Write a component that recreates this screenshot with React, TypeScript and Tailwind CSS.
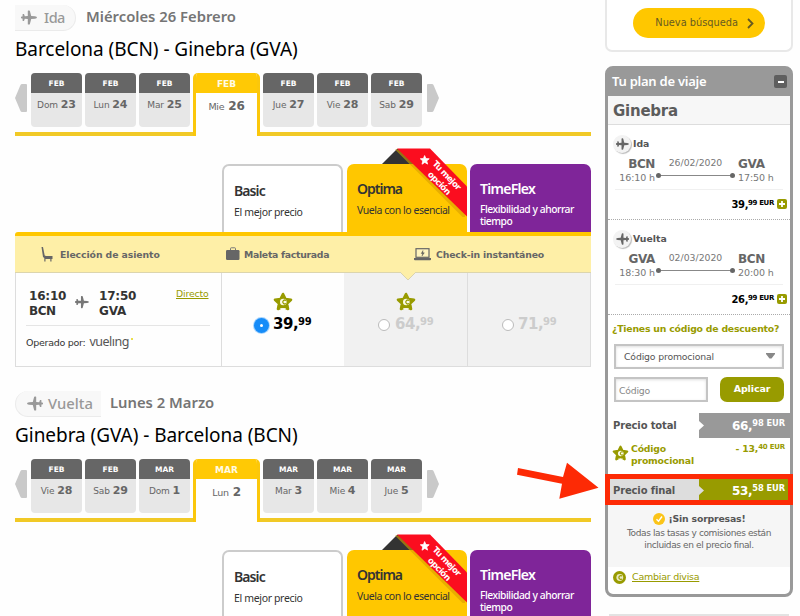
import type { ReactNode } from 'react';

interface Day {
  month: string;
  name: string;
  day: string;
}

interface LegProps {
  label: string;
  from: string;
  to: string;
  date: string;
  depart: string;
  arrive: string;
  price: string;
  flipped?: boolean;
}

const outboundDays: Day[] = [
  { month: 'FEB', name: 'Dom', day: '23' },
  { month: 'FEB', name: 'Lun', day: '24' },
  { month: 'FEB', name: 'Mar', day: '25' },
  { month: 'FEB', name: 'Mie', day: '26' },
  { month: 'FEB', name: 'Jue', day: '27' },
  { month: 'FEB', name: 'Vie', day: '28' },
  { month: 'FEB', name: 'Sab', day: '29' },
];

const returnDays: Day[] = [
  { month: 'FEB', name: 'Vie', day: '28' },
  { month: 'FEB', name: 'Sab', day: '29' },
  { month: 'MAR', name: 'Dom', day: '1' },
  { month: 'MAR', name: 'Lun', day: '2' },
  { month: 'MAR', name: 'Mar', day: '3' },
  { month: 'MAR', name: 'Mie', day: '4' },
  { month: 'MAR', name: 'Jue', day: '5' },
];

function Plane({ className = '', flipped = false }: { className?: string; flipped?: boolean }) {
  return (
    <svg viewBox="0 0 16 14" fill="currentColor" className={`${className} ${flipped ? '-scale-x-100' : ''}`}>
      <path d="M0 6.200 1.500 5.900 1.700 3.500H3l.8 2.200L6.800 5.500V.6Q6.800 0 7.400 0h.8q.5 0 .7.600l1.300 4.900 3.800.3Q16 6.200 16 7t-2 1.200l-3.800.3-1.300 4.900q-.2.600-.7.600h-.8q-.6 0-.6-.6V8.500l-3-.2-.8 2.200H1.700l-.2-2.400L0 7.800z" />
    </svg>
  );
}

function Star({ className = '' }: { className?: string }) {
  return (
    <svg viewBox="0 0 20 19" className={className}>
      <path
        d="M10 2l2.500 5 5.500.7-4 3.900 1 5.400-5-2.400L5 17l1-5.400-4-3.900L7.500 7z"
        fill="#989b00"
        stroke="#989b00"
        strokeWidth="2.600"
        strokeLinejoin="round"
      />
      <circle cx="10.300" cy="10" r="3.300" fill="#fbfbe8" />
      <path d="M13 8.600a1.900 1.900 0 1 0 0 2.800" fill="none" stroke="#989b00" strokeWidth="1.200" />
      <path d="M7.300 16.600h5.400" stroke="#fbfbe8" strokeWidth="1" />
    </svg>
  );
}

function Ribbon() {
  return (
    <svg viewBox="0 0 85 69" className="absolute left-[35px] -top-[16px] h-[69px] w-[85px]">
      <path d="M0 16 15 1h4l14 15z" fill="#333" />
      <path d="M14 0h33l37 38v32z" fill="#d99d00" opacity=".6" transform="translate(-1 1.500)" />
      <path d="M15 .500h33L85 38.500v30z" fill="#fb0d1f" />
      <path
        d="M42.600 7.600l1.300 3 3.300.2-2.500 2.100.9 3.200-2.800-1.700-2.800 1.800.8-3.300-2.500-2.100 3.200-.3z"
        fill="#fff"
        stroke="#fff"
        strokeWidth=".8"
        strokeLinejoin="round"
      />
      <text
        transform="translate(64.300 28) rotate(46)"
        textAnchor="middle"
        y="2"
        fill="#fff"
        className="font-['DejaVu_Sans'] text-[8.500px] font-bold"
        textLength="37"
      >
        Tu mejor
      </text>
      <text
        transform="translate(57.500 35) rotate(46)"
        textAnchor="middle"
        y="3"
        fill="#fff"
        className="font-['DejaVu_Sans'] text-[8.500px] font-bold"
        textLength="29"
      >
        opción
      </text>
    </svg>
  );
}

function Chevron({ right = false }: { right?: boolean }) {
  return (
    <svg viewBox="0 0 12 28" className={`mt-[11px] h-[28px] w-[12px] ${right ? 'ml-[5px]' : 'mr-[4px] -scale-x-100'}`}>
      <path d="M0 1q0-1 1-1h4q1 0 1.500 1L12 14 6.500 27Q6 28 5 28H1q-1 0-1-1z" fill="#c9c9c9" />
    </svg>
  );
}

function DateTabs({ days }: { days: Day[] }) {
  return (
    <div className="flex h-[63px]">
      <div className="flex border-b-4 border-[#f1c926]">
        <Chevron />
      </div>
      {days.map((d, i) =>
        i === 3 ? (
          <div key={i} className="w-[67px] overflow-hidden rounded-t-[5px] border-x-[3px] border-[#fbc70b]">
            <div className="flex h-[20px] items-center justify-center bg-[#ffc905] pt-[3px] text-[9px] font-bold text-[#fffbe5]">
              {d.month}
            </div>
            <div className="pt-[4px] text-center text-[9.500px] tracking-[-0.200px] text-[#666]">
              {d.name} <b className="ml-[1px] text-[12px]">{d.day}</b>
            </div>
          </div>
        ) : (
          <div key={i} className={`border-b-4 border-[#f1c926] ${i < 3 ? 'pr-[3px]' : 'pl-[3px]'}`}>
            <div className="h-[54px] w-[51px] overflow-hidden rounded-[4px] bg-[#e7e7e7]">
              <div className="flex h-[20px] items-center justify-center bg-[#666] pt-[2px] text-[7.500px] font-bold text-white">
                {d.month}
              </div>
              <div className="pt-[4px] text-center text-[9px] tracking-[-0.100px] text-[#666]">
                {d.name} <b className="text-[11px]">{d.day}</b>
              </div>
            </div>
          </div>
        ),
      )}
      <div className="flex-1 border-b-4 border-[#f1c926]">
        <Chevron right />
      </div>
    </div>
  );
}

function FareCards() {
  return (
    <div className="mt-[28px] flex h-[68px] justify-end font-['Noto_Sans'] text-[#333]">
      <div className="mr-[4px] h-full w-[121px] rounded-t-[7px] border-2 border-b-0 border-[#ccc] bg-white pl-[10px] pt-[15px]">
        <h3 className="text-[14px] leading-[19px] font-semibold tracking-[-0.900px]">Basic</h3>
        <p className="mt-[5px] text-[10.500px] leading-[14px] tracking-[-0.350px]">El mejor precio</p>
      </div>
      <div className="relative mr-[3px] h-full w-[120px] rounded-t-[7px] bg-[#ffc700] pl-[10px] pt-[16px]">
        <Ribbon />
        <h3 className="text-[14px] leading-[18px] font-semibold tracking-[-1px]">Optima</h3>
        <p className="mt-[5px] text-[10.500px] leading-[14px] whitespace-nowrap tracking-[-0.450px]">
          Vuela con lo esencial
        </p>
      </div>
      <div className="h-full w-[121px] rounded-t-[7px] bg-[#7f2599] pl-[10px] pt-[16px] text-white">
        <h3 className="text-[14px] leading-[18px] font-semibold tracking-[-0.700px]">TimeFlex</h3>
        <div className="mt-[5px] text-[10.300px] leading-[12px] font-medium tracking-[-0.450px]">
          <p>Flexibilidad y ahorrar</p>
          <p>tiempo</p>
        </div>
      </div>
    </div>
  );
}

function FlightSection({
  tag,
  date,
  route,
  days,
  children,
}: {
  tag: ReactNode;
  date: string;
  route: string;
  days: Day[];
  children?: ReactNode;
}) {
  return (
    <section className="h-[386px]">
      <div className="flex h-[34px] items-center pt-[2px] font-['Noto_Sans']">
        {tag}
        <h2 className="-mt-[3px] text-[14.800px] font-semibold text-[#757575]">{date}</h2>
      </div>
      <h1 className="h-[39px] pt-[3px] font-['Noto_Sans'] text-[19px] leading-[25px] tracking-[-0.050px] whitespace-nowrap text-black">
        {route}
      </h1>
      <DateTabs days={days} />
      <FareCards />
      {children}
    </section>
  );
}

function FeatureBar() {
  return (
    <div className="relative flex h-[41px] items-center rounded-tl-[3px] border-t-4 border-b border-t-[#ffc700] border-b-[#dcd5ad] bg-[#feefa7] text-[9.300px] font-bold tracking-[-0.150px] text-[#666]">
      <div className="flex w-[211px] items-center pl-[26px]">
        <svg viewBox="0 0 12 15" className="mr-[7px] h-[15px] w-[12px]">
          <path d="M.5 0H2l1.700 8.500 1.300.5h6.500v3h-1v2.500H9.300V12H4.500v2.500H3.300v-3.600L2 10z" fill="#666" />
        </svg>
        <span className="pt-px tracking-[-0.080px]">Elección de asiento</span>
      </div>
      <div className="flex w-[188px] items-center">
        <svg viewBox="0 0 14 14" className="mr-[4px] h-[14px] w-[14px]">
          <path d="M4.500 4V1.500q0-.7.700-.7h3.600q.7 0 .7.700V4" fill="none" stroke="#777" />
          <rect y="3" width="13.500" height="10" rx="1.200" fill="#666" />
        </svg>
        <span className="pt-px tracking-[-0.280px]">Maleta facturada</span>
      </div>
      <div className="flex items-center">
        <svg viewBox="0 0 17 13" className="mr-[5px] h-[13px] w-[17px]">
          <rect x="2" y=".7" width="13" height="8.600" fill="#fff4bd" stroke="#666" strokeWidth="1.200" />
          <path d="M0 10h17v1.500q0 .8-1 .8H1q-1 0-1-.8z" fill="#666" />
          <path d="M9 2.500 7.200 5.500h1.500L8 8l2.300-3.200H8.700z" fill="#555" stroke="#555" strokeWidth=".4" />
        </svg>
        <span className="pt-px">Check-in instantáneo</span>
      </div>
      <svg viewBox="0 0 18 9" className="absolute -bottom-[9px] left-[384px] h-[9px] w-[18px]">
        <path d="M1 0l8 8 8-8" fill="#feefa7" stroke="#d9d3b0" />
        <path d="M2 0h14" stroke="#feefa7" strokeWidth="1.500" />
      </svg>
    </div>
  );
}

function FarePrice({ amount, className }: { amount: string; className: string }) {
  return (
    <div className={`flex ${className}`}>
      <b className="text-[15px] leading-[22px] tracking-[-0.500px]">{amount},</b>
      <b className="text-[10px] leading-[18px] tracking-[-0.300px]">99</b>
    </div>
  );
}

function FlightRow() {
  return (
    <div className="flex h-[94px] border border-t-0 border-[#ddd]">
      <div className="w-[206px] border-r border-[#ddd] pl-[10px]">
        <div className="flex h-[53px] w-[184px] border-b border-[#e5e5e5] pl-[3px] pt-[16px] text-[12px] leading-[15px] font-bold text-[#333]">
          <div className="w-[46px]">
            <div className="tracking-[-0.200px]">16:10</div>
            <div className="tracking-[-0.500px]">BCN</div>
          </div>
          <Plane className="mt-[6px] mr-[10px] h-[14px] w-[14px] text-[#777]" />
          <div className="w-[76px]">
            <div className="tracking-[-0.200px]">17:50</div>
            <div className="tracking-[-0.200px]">GVA</div>
          </div>
          <a className="-mt-[3px] ml-px text-[9.300px] font-normal tracking-[-0.150px] text-[#989b00] underline">
            Directo
          </a>
        </div>
        <div className="flex items-baseline pt-[7px]">
          <span className="text-[9.500px] tracking-[-0.280px] text-[#333]">Operado por:</span>
          <span className="ml-[4px] font-['Noto_Sans'] text-[12.500px] tracking-[-0.500px] text-[#555]">vuelıng</span>
          <span className="mb-[7px] ml-[2px] h-[2px] w-[2px] self-center rounded-full bg-[#e3d312]" />
        </div>
      </div>
      <div className="w-[122px] pt-[19px]">
        <Star className="ml-[51px] h-[19px] w-[20px]" />
        <div className="mt-[2px] flex h-[24px] pl-[32px]">
          <span className="mt-[5px] flex h-[15px] w-[15px] items-center justify-center rounded-full bg-[#168cf8] ring-1 ring-[#a9d5fd]">
            <span className="h-[3px] w-[3px] rounded-full bg-white" />
          </span>
          <FarePrice amount="39" className="ml-[4px] text-black" />
        </div>
      </div>
      <div className="w-[124px] border-r border-[#ddd] bg-[#f1f1f1] pt-[19px]">
        <Star className="ml-[52px] h-[19px] w-[20px]" />
        <div className="mt-[2px] flex h-[24px] pl-[34px]">
          <span className="mt-[6px] h-[12px] w-[12px] rounded-full border border-[#bbb] bg-white" />
          <FarePrice amount="64" className="ml-[5px] text-[#ccc]" />
        </div>
      </div>
      <div className="flex-1 bg-[#f1f1f1] pt-[40px]">
        <div className="flex h-[24px] pl-[34px]">
          <span className="mt-[6px] h-[12px] w-[12px] rounded-full border border-[#bbb] bg-white" />
          <FarePrice amount="71" className="ml-[4px] text-[#ccc]" />
        </div>
      </div>
    </div>
  );
}

function Leg({ label, from, to, date, depart, arrive, price, flipped }: LegProps) {
  return (
    <div className="h-[95px] border-b border-dotted border-[#aaa] pt-[9px] text-[#666]">
      <div className="flex h-[20px] items-center pl-[5px]">
        <span className="flex h-[18px] w-[18px] items-center justify-center rounded-full bg-[#f3f3f3] shadow-[1px_1px_1px_#bbb]">
          <Plane className="h-[12px] w-[13px]" flipped={flipped} />
        </span>
        <b className="ml-[2px] text-[9.300px] text-[#555]">{label}</b>
      </div>
      <div className="flex">
        <div className="w-[47px] pt-[4px] text-right">
          <b className="block text-[12px] leading-[13px] tracking-[-0.400px]">{from}</b>
          <span className="block text-[9.500px] leading-[13px] tracking-[-0.100px] text-[#777]">{depart} h</span>
        </div>
        <div className="mx-[1px] w-[79px] text-center">
          <div className="pt-[3px] text-[9.300px] leading-[11px] text-[#777]">{date}</div>
          <div className="mt-[5px] flex items-center">
            <span className="h-[5px] w-[5px] rounded-full bg-[#666]" />
            <span className="h-px flex-1 bg-[#888]" />
            <span className="h-[5px] w-[5px] rounded-full bg-[#666]" />
          </div>
        </div>
        <div className="pl-[2px] pt-[4px]">
          <b className="block text-[12px] leading-[13px] tracking-[-0.300px]">{to}</b>
          <span className="block text-[9.500px] leading-[13px] tracking-[-0.100px] text-[#777]">{arrive} h</span>
        </div>
      </div>
      <div className="mx-[7px] mt-[5px] h-px bg-[#f0f0f0]" />
      <div className="mt-[8px] flex items-start justify-end pr-[3px] text-black">
        <b className="text-[10px] leading-[14px] tracking-[-0.400px]">{price},</b>
        <b className="text-[7px] leading-[11px] tracking-[-0.350px]">99 EUR</b>
        <span className="mt-px ml-[3px] flex h-[10px] w-[10px] items-center justify-center rounded-[2px] bg-[#989b00]">
          <svg viewBox="0 0 6 6" className="h-[6px] w-[6px]">
            <path d="M3 0v6M0 3h6" stroke="#fff" strokeWidth="1.800" />
          </svg>
        </span>
      </div>
    </div>
  );
}

function PriceRow({
  label,
  amount,
  cents,
  tone,
  className,
}: {
  label: string;
  amount: string;
  cents: string;
  tone: string;
  className: string;
}) {
  return (
    <div className={`flex h-[25px] items-center ${className}`}>
      <span className="w-[91px] pl-[5px] text-[10px] font-bold tracking-[-0.150px] whitespace-nowrap text-[#555]">
        {label}
      </span>
      <div
        className={`flex h-full flex-1 justify-end pr-[5px] font-bold text-white [clip-path:polygon(0_0,100%_0,100%_100%,0_100%,0_68%,5px_50%,0_32%)] ${tone}`}
      >
        <span className="text-[12px] leading-[26px] tracking-[-0.300px]">{amount},</span>
        <span className="text-[8.300px] leading-[21px] tracking-[-0.100px]">{cents} EUR</span>
      </div>
    </div>
  );
}

function TripPlan() {
  return (
    <div className="relative h-[531px] rounded-[8px] border-[3px] border-[#999] bg-white">
      <div className="-mx-px flex h-[27px] items-center justify-between bg-[#999] pl-[5px] pr-[4px] font-['Noto_Sans'] text-[13px] font-semibold text-white">
        <span className="-mt-[2px] tracking-[-0.250px]">Tu plan de viaje</span>
        <span className="-mt-[2px] flex h-[13px] w-[13px] items-center justify-center rounded-[2px] bg-[#5f5f5f]">
          <span className="h-[2px] w-[6px] bg-white" />
        </span>
      </div>
      <div className="h-[29px] border-b border-[#ddd] bg-[#f7f7f7] pl-[5px] text-[15px] leading-[30px] font-bold tracking-[-0.250px] text-[#5c5c5c]">
        Ginebra
      </div>
      <Leg label="Ida" from="BCN" to="GVA" date="26/02/2020" depart="16:10" arrive="17:50" price="39" />
      <Leg label="Vuelta" from="GVA" to="BCN" date="02/03/2020" depart="18:30" arrive="20:00" price="26" flipped />
      <div className="pt-[6px] pl-[4px] text-[9.300px] leading-[15px] font-bold tracking-[-0.200px] whitespace-nowrap text-[#989b00]">
        ¿Tienes un código de descuento?
      </div>
      <div className="mt-[8px] ml-[6px] flex h-[25px] w-[170px] items-center justify-between border-2 border-[#c4c4c4] pt-px pr-[7px] pl-[8px] text-[9.300px] tracking-[-0.150px] text-[#555] shadow-[inset_0_1px_3px_#ddd]">
        Código promocional
        <svg viewBox="0 0 9 6" className="-mt-[2px] h-[6px] w-[9px]">
          <path d="M0 0h9v1L5.500 5.500h-2L0 1z" fill="#888" />
        </svg>
      </div>
      <div className="mt-[8px] ml-[6px] flex w-[170px] justify-between">
        <div className="h-[25px] w-[94px] border-2 border-[#c4c4c4] pl-[3px] text-[9.300px] leading-[23px] tracking-[-0.200px] text-[#888] shadow-[inset_0_1px_3px_#ddd]">
          Código
        </div>
        <button className="h-[25px] w-[64px] rounded-[7px] bg-[#989b00] text-[9.500px] font-bold tracking-[-0.100px] text-white">
          Aplicar
        </button>
      </div>
      <PriceRow label="Precio total" amount="66" cents="98" className="mt-[11px]" tone="bg-[#999]" />
      <div className="flex h-[41px] pt-[5px] pl-[4px] text-[9.300px] leading-[12px] font-bold text-[#989b00]">
        <Star className="mt-[2px] h-[16px] w-[17px]" />
        <span className="ml-[2px] tracking-[-0.180px]">
          Código
          <br />
          promocional
        </span>
        <span className="ml-auto flex pr-[5px] tracking-[-0.200px]">
          <span>- 13,</span>
          <span className="text-[7px] leading-[9px]">40 EUR</span>
        </span>
      </div>
      <PriceRow label="Precio final" amount="53" cents="58" className="-mt-px bg-[#ddd]" tone="bg-[#989b00]" />
      <div className="mt-px h-[63px] bg-[#f6f6f6] pt-[9px] text-center text-[9px] leading-[11.500px] tracking-[-0.380px] text-[#666]">
        <div className="mb-[3px] flex items-center justify-center text-[9.300px] font-bold tracking-[-0.180px] text-[#555]">
          <svg viewBox="0 0 12 12" className="mr-[4px] h-[12px] w-[12px]">
            <circle cx="6" cy="6" r="6" fill="#fbc418" />
            <path d="M3.500 6.300 5.500 8.200 9 3.500" fill="none" stroke="#fff" strokeWidth="1.400" />
          </svg>
          ¡Sin sorpresas!
        </div>
        Todas las tasas y comisiones están
        <br />
        incluidas en el precio final.
      </div>
      <div className="flex items-center pt-[3px] pl-[5px]">
        <svg viewBox="0 0 13 13" className="mr-[6px] h-[13px] w-[13px]">
          <circle cx="6.500" cy="6.500" r="6.500" fill="#989b00" />
          <circle cx="6.800" cy="6.500" r="3.400" fill="#e9e9bf" />
          <path d="M9.200 5.200a1.900 1.900 0 1 0 0 2.600" fill="none" stroke="#989b00" strokeWidth="1.200" />
        </svg>
        <a className="text-[9.500px] tracking-[-0.250px] text-[#989b00] underline">Cambiar divisa</a>
      </div>
      {/* Final price highlight */}
      <div className="absolute top-[405px] -right-[3px] -left-[3px] h-[31px] border-[5px] border-[#fd2a05]" />
    </div>
  );
}

export default function App() {
  return (
    <div className="relative flex h-[616px] w-[800px] overflow-hidden bg-[#fefefe] font-['DejaVu_Sans',sans-serif]">
      <main className="ml-[15px] w-[576px]">
        <FlightSection
          days={outboundDays}
          date="Miércoles 26 Febrero"
          route="Barcelona (BCN) - Ginebra (GVA)"
          tag={
            <div className="mr-[10px] flex h-[26px] w-[61px] items-center rounded-r-full border-r border-b border-[#ebebeb] bg-[#f8f8f8] pl-[6px] text-[14.500px] font-medium tracking-[-0.500px] text-[#999]">
              <Plane className="mr-[7px] h-[15px] w-[16px]" />
              Ida
            </div>
          }
        >
          <FeatureBar />
          <FlightRow />
        </FlightSection>
        <FlightSection
          days={returnDays}
          date="Lunes 2 Marzo"
          route="Ginebra (GVA) - Barcelona (BCN)"
          tag={
            <div className="mr-[9px] flex h-[26px] w-[86px] items-center rounded-l-full border-b border-l border-[#ebebeb] bg-[#f8f8f8] pl-[11px] text-[14.800px] font-medium text-[#999]">
              <Plane className="mr-[5px] h-[15px] w-[16px]" flipped />
              Vuelta
            </div>
          }
        />
      </main>
      <aside className="ml-[14px] w-[188px]">
        <div className="mb-[14px] flex h-[52px] justify-center rounded-b-[7px] border-2 border-t-0 border-[#e8e8e8] bg-white pt-[8px]">
          <button className="flex h-[30px] w-[132px] items-center justify-end rounded-full bg-[#ffc700] pt-px pr-[11px] text-[9.800px] text-[#665a20]">
            Nueva búsqueda
            <svg viewBox="0 0 7 11" className="ml-[9px] h-[11px] w-[7px]">
              <path d="M1 1l4.500 4.500L1 10" fill="none" stroke="#665a20" strokeWidth="1.800" />
            </svg>
          </button>
        </div>
        <TripPlan />
        <div className="mx-[4px] mt-[17px] h-[4px] border-t-2 border-[#e3e3e3]" />
      </aside>
      {/* Arrow towards the final price */}
      <svg viewBox="0 0 84 38" className="absolute top-[462px] left-[516px] h-[38px] w-[84px]">
        <path d="M2 6l45 9L51 .700 82.500 25.700 43.300 36.700 46 21.700 1 12.700z" fill="#fd2a05" />
      </svg>
    </div>
  );
}
